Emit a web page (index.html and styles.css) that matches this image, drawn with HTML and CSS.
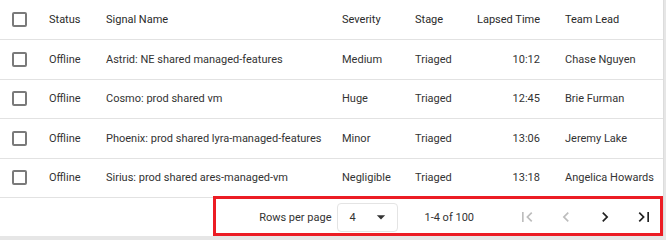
FILE: index.html
```html
<!DOCTYPE html>
<html lang="en">
<head>
    <meta charset="UTF-8">
    <meta name="viewport" content="width=device-width, initial-scale=1.0">
    <title>Signals</title>
    <link rel="stylesheet" href="styles.css">
</head>
<body>
    <div class="panel">
        <table class="signals">
            <colgroup>
                <col class="c-check">
                <col class="c-status">
                <col class="c-name">
                <col class="c-severity">
                <col class="c-stage">
                <col class="c-time">
                <col class="c-lead">
            </colgroup>
            <thead>
                <tr>
                    <th><span class="box"></span></th>
                    <th>Status</th>
                    <th>Signal Name</th>
                    <th>Severity</th>
                    <th>Stage</th>
                    <th class="num">Lapsed Time</th>
                    <th class="lead">Team Lead</th>
                </tr>
            </thead>
            <tbody>
                <tr>
                    <td><span class="box"></span></td>
                    <td>Offline</td>
                    <td>Astrid: NE shared managed-features</td>
                    <td>Medium</td>
                    <td>Triaged</td>
                    <td class="num">10:12</td>
                    <td class="lead">Chase Nguyen</td>
                </tr>
                <tr>
                    <td><span class="box"></span></td>
                    <td>Offline</td>
                    <td>Cosmo: prod shared vm</td>
                    <td>Huge</td>
                    <td>Triaged</td>
                    <td class="num">12:45</td>
                    <td class="lead">Brie Furman</td>
                </tr>
                <tr>
                    <td><span class="box"></span></td>
                    <td>Offline</td>
                    <td>Phoenix: prod shared lyra-managed-features</td>
                    <td>Minor</td>
                    <td>Triaged</td>
                    <td class="num">13:06</td>
                    <td class="lead">Jeremy Lake</td>
                </tr>
                <tr>
                    <td><span class="box"></span></td>
                    <td>Offline</td>
                    <td>Sirius: prod shared ares-managed-vm</td>
                    <td>Negligible</td>
                    <td>Triaged</td>
                    <td class="num">13:18</td>
                    <td class="lead">Angelica Howards</td>
                </tr>
            </tbody>
        </table>

        <div class="pager">
            <span class="rows-label">Rows per page</span>
            <div class="rows-select">
                <span>4</span>
                <svg viewBox="0 0 24 24" width="20" height="20"><path d="M7 10l5 5 5-5z"/></svg>
            </div>
            <span class="range">1-4 of 100</span>
            <button class="nav off" type="button">
                <svg viewBox="0 0 24 24" width="20" height="20"><path d="M18.41 16.59L13.82 12l4.59-4.59L17 6l-6 6 6 6zM6 6h2v12H6z"/></svg>
            </button>
            <button class="nav off" type="button">
                <svg viewBox="0 0 24 24" width="20" height="20"><path d="M15.41 7.41L14 6l-6 6 6 6 1.41-1.41L10.83 12z"/></svg>
            </button>
            <button class="nav" type="button">
                <svg viewBox="0 0 24 24" width="20" height="20"><path d="M10 6L8.59 7.41 13.17 12l-4.58 4.59L10 18l6-6z"/></svg>
            </button>
            <button class="nav" type="button">
                <svg viewBox="0 0 24 24" width="20" height="20"><path d="M5.59 7.41L10.18 12l-4.59 4.59L7 18l6-6-6-6zM16 6h2v12h-2z"/></svg>
            </button>
            <div class="mark"></div>
        </div>
    </div>
</body>
</html>
```

FILE: styles.css
```css
body {
    margin: 0;
    background: #e6e6e6;
    font-family: Roboto, "Liberation Sans", sans-serif;
    font-size: 11px;
    color: #333;
}

.panel {
    width: 663px;
    background: #fff;
    border-right: 1px solid #dcdcdc;
}

.signals {
    width: 100%;
    border-collapse: collapse;
    table-layout: fixed;
}

.c-check { width: 49px; }
.c-status { width: 57px; }
.c-name { width: 236px; }
.c-severity { width: 73px; }
.c-stage { width: 62px; }
.c-time { width: 76px; }

.signals th,
.signals td {
    height: 38.5px;
    padding: 0;
    text-align: left;
    white-space: nowrap;
    border-bottom: 1px solid #e2e2e2;
}

.signals th {
    height: 39px;
    font-weight: 400;
    color: #2a2a2a;
}

.signals .num {
    text-align: right;
    padding-right: 13px;
}

.signals .lead {
    padding-left: 12px;
}

.box {
    display: block;
    width: 11px;
    height: 11px;
    margin-left: 12px;
    border: 2px solid #7a7a7a;
    border-radius: 2px;
}

.pager {
    position: relative;
    display: flex;
    align-items: center;
    justify-content: flex-end;
    height: 38px;
}

.rows-label {
    margin-right: 6px;
}

.rows-select {
    display: flex;
    align-items: center;
    justify-content: space-between;
    box-sizing: border-box;
    width: 61px;
    height: 29px;
    padding: 0 12px 0 11px;
    border: 1px solid #e4e4e4;
    border-radius: 4px;
}

.rows-select svg {
    fill: #333;
    margin-right: -6px;
}

.range {
    margin-left: 26px;
    margin-right: 33px;
}

.nav {
    display: flex;
    align-items: center;
    justify-content: center;
    width: 39px;
    height: 30px;
    padding: 0;
    border: 0;
    background: none;
}

.nav svg {
    fill: #222;
}

.nav.off svg {
    fill: #bdbdbd;
}

/* highlight frame drawn over the pager */
.mark {
    position: absolute;
    left: 213px;
    right: 0;
    top: -2px;
    bottom: 0;
    border: 3px solid #ec1c24;
}
```
